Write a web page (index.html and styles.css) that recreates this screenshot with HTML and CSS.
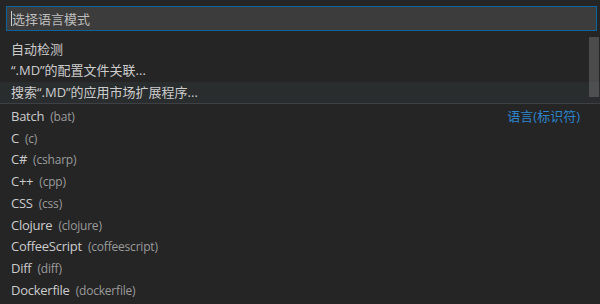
FILE: index.html
```html
<!DOCTYPE html>
<html lang="zh-CN">
<head>
  <meta charset="UTF-8" />
  <title>选择语言模式</title>
  <link rel="stylesheet" href="styles.css">
</head>
<body>

  <div class="quick-input">
    <!-- Filter box -->
    <div class="input-box">
      <span class="cursor"></span>
      <span class="placeholder">选择语言模式</span>
    </div>

    <!-- Picker list -->
    <div class="list">
      <div class="row">自动检测</div>
      <div class="row">“.MD”的配置文件关联...</div>
      <div class="row focused">搜索“.MD”的应用市场扩展程序...</div>

      <div class="row group-start">
        <span class="label">Batch</span><span class="desc">(bat)</span>
        <span class="group-label">语言(标识符)</span>
      </div>
      <div class="row"><span class="label">C</span><span class="desc">(c)</span></div>
      <div class="row"><span class="label">C#</span><span class="desc">(csharp)</span></div>
      <div class="row"><span class="label">C++</span><span class="desc">(cpp)</span></div>
      <div class="row"><span class="label">CSS</span><span class="desc">(css)</span></div>
      <div class="row"><span class="label">Clojure</span><span class="desc">(clojure)</span></div>
      <div class="row"><span class="label">CoffeeScript</span><span class="desc">(coffeescript)</span></div>
      <div class="row"><span class="label">Diff</span><span class="desc">(diff)</span></div>
      <div class="row"><span class="label">Dockerfile</span><span class="desc">(dockerfile)</span></div>

      <div class="scroll-slider"></div>
    </div>
  </div>

</body>
</html>
```

FILE: styles.css
```css
body {
  margin: 0;
  background: #252526;
  color: #cccccc;
  font-family: "Open Sans", "Noto Sans CJK SC", sans-serif;
  font-size: 13px;
  overflow: hidden;
}

.quick-input {
  padding: 6px 0 0 6px;
}

.input-box {
  width: 585px;
  height: 23px;
  border: 1px solid #0e639c;
  background: #3c3c3c;
  display: flex;
  align-items: center;
  padding-left: 4px;
  box-sizing: content-box;
}

.cursor {
  width: 1px;
  height: 15px;
  background: #cccccc;
}

.placeholder {
  color: #bdbdbd;
}

.list {
  position: relative;
  margin: 6px 0 0 -6px;
  padding-top: 1px;
}

.row {
  height: 21.75px;
  line-height: 21.75px;
  padding-left: 11px;
  padding-top: 1px;
  box-sizing: border-box;
  display: flex;
  align-items: center;
  white-space: nowrap;
}

.row.focused {
  background: #2a2d2e;
}

.row.group-start {
  border-top: 1px solid #3f3f46;
  height: 23.75px;
  padding-top: 2px;
}

.label {
  letter-spacing: -0.25px;
}

.desc {
  margin-left: 6px;
  font-size: 12px;
  letter-spacing: -0.2px;
  color: #9b9b9b;
}

.group-label {
  margin-left: auto;
  margin-right: 20px;
  color: #2b84cc;
}

.scroll-slider {
  position: absolute;
  top: 0;
  right: 1px;
  width: 10px;
  height: 60px;
  background: rgba(121, 121, 121, 0.45);
}
```
